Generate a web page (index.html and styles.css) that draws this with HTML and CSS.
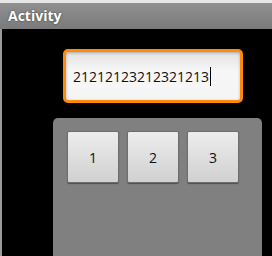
FILE: index.html
```html
<!DOCTYPE html>
<html>
<head>
    <meta charset="utf-8">
    <title>Activity</title>
    <link rel="stylesheet" href="styles.css">
</head>
<body>
    <div class="status"></div>
    <div class="titlebar">Activity</div>
    <div class="content">
        <div class="field">
            <span class="value">21212123212321213</span><span class="cursor"></span>
        </div>
        <div class="panel">
            <div class="key">1</div>
            <div class="key">2</div>
            <div class="key">3</div>
        </div>
    </div>
</body>
</html>
```

FILE: styles.css
```css
html, body {
    height: 100%;
}

body {
    margin: 0;
    background-color: #000;
    font-family: "Open Sans", "DejaVu Sans", sans-serif;
    display: flex;
    flex-direction: column;
    overflow: hidden;
}

.status {
    height: 3px;
    background-color: #e6e6e6;
}

.titlebar {
    height: 26px;
    line-height: 26px;
    padding-left: 8px;
    background: linear-gradient(#909090, #7a7a7a);
    color: #fff;
    font-size: 14px;
    font-weight: bold;
    text-shadow: 0 0 2px rgba(0, 0, 0, 0.6);
}

.content {
    flex: 1;
    display: flex;
    flex-direction: column;
    border-left: 2px solid #9a9a9a;
    padding-top: 20px;
}

.field {
    box-sizing: border-box;
    width: 180px;
    height: 54px;
    margin-left: 61px;
    border: 3px solid #ff8a0a;
    border-radius: 5px;
    background: linear-gradient(#e2e2e2, #f7f7f7 40%, #f4f4f4);
    box-shadow: inset 0 1px 3px rgba(0, 0, 0, 0.25);
    display: flex;
    align-items: center;
    padding-left: 7px;
    font-size: 14px;
    color: #111;
}

.cursor {
    display: inline-block;
    width: 1px;
    height: 19px;
    margin-left: 1px;
    background-color: #000;
}

.panel {
    flex: 1;
    width: 195px;
    margin-left: 51px;
    margin-top: 15px;
    padding: 13px 0 0 14px;
    background-color: #808080;
    border-radius: 5px 5px 0 0;
    display: flex;
    align-items: flex-start;
    gap: 8px;
}

.key {
    box-sizing: border-box;
    width: 52px;
    height: 52px;
    border: 1px solid #6e6e6e;
    border-radius: 2px;
    background: linear-gradient(#ededed, #d0d0d0);
    box-shadow: 0 1px 1px rgba(0, 0, 0, 0.4);
    display: flex;
    align-items: center;
    justify-content: center;
    font-size: 14px;
    color: #111;
}
```
